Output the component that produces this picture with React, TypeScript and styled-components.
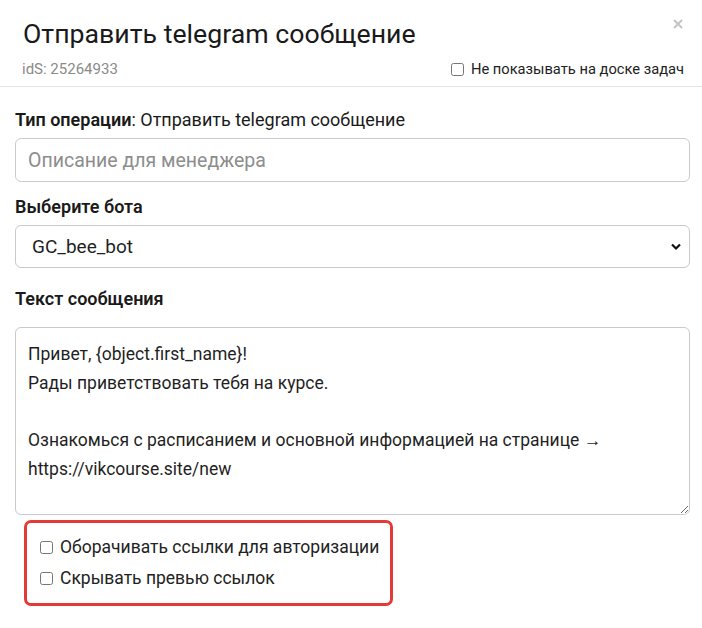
import { createGlobalStyle, styled } from 'styled-components';

const GlobalStyle = createGlobalStyle`
    html, body {
        margin: 0;
        padding: 0;
        background: #ffffff;
    }
    body {
        font-family: Roboto, 'Liberation Sans', sans-serif;
        color: #1f1f1f;
    }
`;

const Modal = styled.div`
    width: 702px;
    height: 628px;
    background: #fff;
    box-sizing: border-box;
    display: flex;
    flex-direction: column;
`;

const Header = styled.div`
    padding: 16px 18px 0 22px;
    border-bottom: 1px solid #e5e5e5;
    height: 87px;
    box-sizing: border-box;
    display: flex;
    flex-direction: column;
`;

const TitleRow = styled.div`
    display: flex;
    justify-content: space-between;
    align-items: flex-start;
`;

const Title = styled.h1`
    margin: 0 0 0 1px;
    font-size: 26.7px;
    font-weight: 400;
    line-height: 36px;
    color: #1a1a1a;
`;

const Close = styled.button`
    border: none;
    background: none;
    padding: 0;
    margin: 2px 0 0;
    width: 12px;
    height: 12px;
    display: flex;
    cursor: pointer;
`;

const MetaRow = styled.div`
    display: flex;
    justify-content: space-between;
    align-items: center;
    margin-top: 8px;
`;

const Ids = styled.span`
    font-size: 15px;
    color: #8a8a8a;
`;

const CheckLabel = styled.label<{ size: number }>`
    display: flex;
    align-items: center;
    gap: 7px;
    font-size: ${p => p.size}px;
    color: #222;
    white-space: nowrap;
    cursor: pointer;
`;

const Box = styled.input`
    margin: 0;
    width: 13px;
    height: 13px;
    flex-shrink: 0;
`;

const Body = styled.div`
    padding: 22px 12px 0 15px;
    display: flex;
    flex-direction: column;
`;

const FieldLabel = styled.div<{ gap: number }>`
    font-size: 18px;
    line-height: 22px;
    margin-bottom: ${p => p.gap}px;
    color: #1a1a1a;

    b {
        font-weight: 600;
    }
`;

const fieldBase = `
    width: 100%;
    box-sizing: border-box;
    border: 1px solid #c9c9d2;
    border-radius: 6px;
    font-family: Roboto, 'Liberation Sans', sans-serif;
    font-size: 17.5px;
    color: #1f1f1f;
    background: #fff;
    outline: none;
`;

const TextInput = styled.input`
    ${fieldBase};
    height: 44px;
    padding: 0 12px;
    margin-bottom: 14px;
    font-size: 19.5px;

    &::placeholder {
        color: #8d8d8d;
    }
`;

const SelectWrap = styled.div`
    position: relative;
    margin-bottom: 20px;
`;

const Select = styled.select`
    ${fieldBase};
    height: 43px;
    padding: 0 12px 0 16px;
    font-size: 19px;
    appearance: none;
`;

const Chevron = styled.svg`
    position: absolute;
    right: 8px;
    top: 17px;
    pointer-events: none;
`;

const TextArea = styled.textarea`
    ${fieldBase};
    height: 188px;
    padding: 12px 12px;
    line-height: 28.7px;
    resize: vertical;
    margin-top: 3px;
`;

const Options = styled.div`
    margin: 5px 0 0 9px;
    width: 369px;
    box-sizing: border-box;
    border: 3px solid #e53935;
    border-radius: 7px;
    padding: 14px 10px 15px 13px;
    display: flex;
    flex-direction: column;
    gap: 11px;
`;

const message =
    'Привет, {object.first_name}!\nРады приветствовать тебя на курсе.\n\nОзнакомься с расписанием и основной информацией на странице →\nhttps://vikcourse.site/new';

export default function App() {
    return (
        <Modal>
            <GlobalStyle />
            <Header>
                <TitleRow>
                    <Title>Отправить telegram сообщение</Title>
                    <Close aria-label="close">
                        <svg width="12" height="12" viewBox="0 0 12 12">
                            <path d="M2 2L10 10M10 2L2 10" stroke="#c4c4c4" strokeWidth="2" />
                        </svg>
                    </Close>
                </TitleRow>
                <MetaRow>
                    <Ids>idS: 25264933</Ids>
                    <CheckLabel size={14.7}>
                        <Box type="checkbox" />
                        Не показывать на доске задач
                    </CheckLabel>
                </MetaRow>
            </Header>
            <Body>
                <FieldLabel gap={7}>
                    <b>Тип операции</b>: Отправить telegram сообщение
                </FieldLabel>
                <TextInput placeholder="Описание для менеджера" />
                <FieldLabel gap={7}>
                    <b>Выберите бота</b>
                </FieldLabel>
                <SelectWrap>
                    <Select defaultValue="GC_bee_bot">
                        <option>GC_bee_bot</option>
                    </Select>
                    <Chevron width="12" height="9" viewBox="0 0 12 9">
                        <path d="M2 2.5L6 6.5L10 2.5" fill="none" stroke="#111" strokeWidth="2.2" />
                    </Chevron>
                </SelectWrap>
                <FieldLabel gap={14}>
                    <b>Текст сообщения</b>
                </FieldLabel>
                <TextArea defaultValue={message} />
                <Options>
                    <CheckLabel size={17.5}>
                        <Box type="checkbox" />
                        Оборачивать ссылки для авторизации
                    </CheckLabel>
                    <CheckLabel size={17.5}>
                        <Box type="checkbox" />
                        Скрывать превью ссылок
                    </CheckLabel>
                </Options>
            </Body>
        </Modal>
    );
}
